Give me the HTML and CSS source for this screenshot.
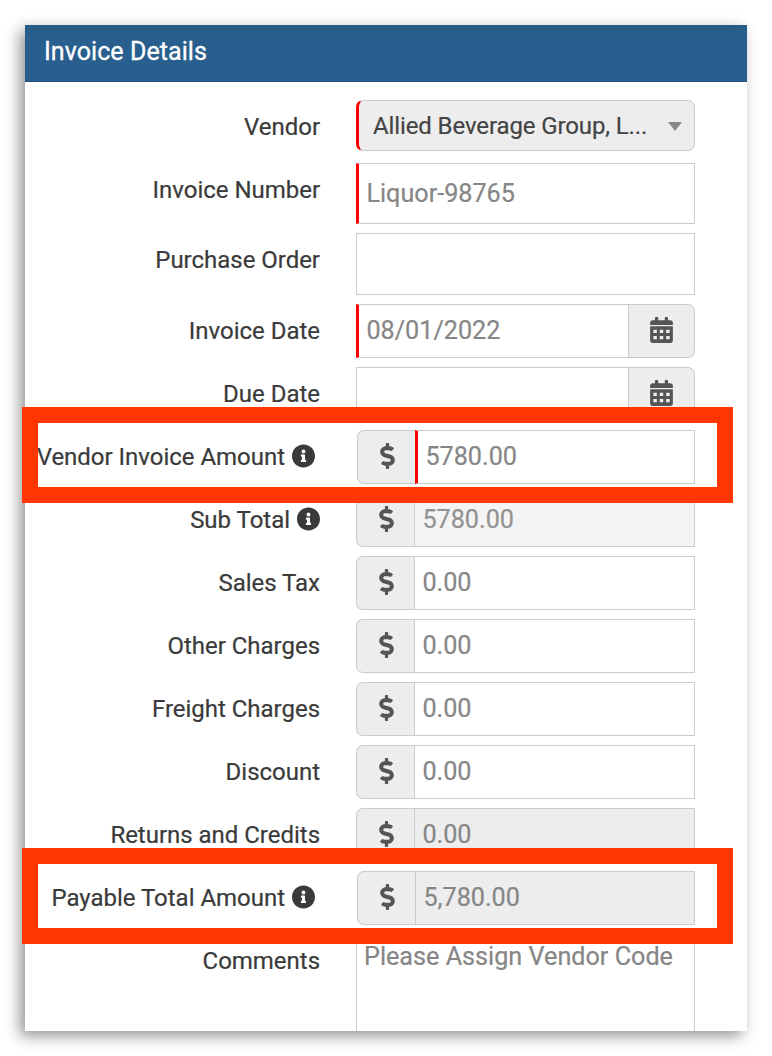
FILE: index.html
```html
<!DOCTYPE html>
<html lang="en">
<head>
    <meta charset="UTF-8">
    <meta name="viewport" content="width=device-width, initial-scale=1.0">
    <title>Invoice Details</title>
    <link rel="stylesheet" href="styles.css">
</head>
<body>
    <svg class="icon-defs" width="0" height="0">
        <symbol id="dollar" viewBox="0 0 288 512">
            <path d="M209.2 233.4l-108-31.6C88.7 198.2 80 186.5 80 173.5c0-16.3 13.2-29.5 29.5-29.5h66.3c12.2 0 24.2 3.7 34.2 10.5 6.1 4.1 14.3 3.1 19.5-2l34.8-34c7.1-6.9 6.1-18.4-1.8-24.5C238 74.8 207.4 64.1 176 64V16c0-8.8-7.2-16-16-16h-32c-8.8 0-16 7.2-16 16v48h-2.5C45.8 64-5.4 118.7.5 183.6c4.2 46.1 39.4 83.6 83.8 96.6l102.5 30c12.5 3.7 21.2 15.3 21.2 28.3 0 16.3-13.2 29.5-29.5 29.5h-66.3C100 368 88 364.3 78 357.5c-6.1-4.1-14.3-3.1-19.5 2l-34.8 34c-7.1 6.9-6.1 18.4 1.8 24.5 24.5 19.2 55.1 29.9 86.5 30v48c0 8.8 7.2 16 16 16h32c8.8 0 16-7.2 16-16v-48.2c46.6-.9 90.3-28.6 105.7-72.7 21.5-61.6-14.6-124.8-72.5-141.7z"/>
        </symbol>
        <symbol id="info" viewBox="8 8 496 496">
            <path d="M256 8C119.043 8 8 119.083 8 256c0 136.997 111.043 248 248 248s248-111.003 248-248C504 119.083 392.957 8 256 8zm0 110c23.196 0 42 18.804 42 42s-18.804 42-42 42-42-18.804-42-42 18.804-42 42-42zm56 254c0 6.627-5.373 12-12 12h-88c-6.627 0-12-5.373-12-12v-24c0-6.627 5.373-12 12-12h12v-64h-12c-6.627 0-12-5.373-12-12v-24c0-6.627 5.373-12 12-12h64c6.627 0 12 5.373 12 12v100h12c6.627 0 12 5.373 12 12v24z"/>
        </symbol>
        <symbol id="calendar" viewBox="0 0 448 512">
            <path fill-rule="evenodd" d="M0 464c0 26.500 21.500 48 48 48h352c26.500 0 48-21.500 48-48V184H0v280zM64 250h68v64H64zM190 250h68v64h-68zM316 250h68v64h-68zM64 376h68v64H64zM190 376h68v64h-68zM316 376h68v64h-68zM400 64h-48V16c0-8.800-7.200-16-16-16h-32c-8.800 0-16 7.200-16 16v48H160V16c0-8.800-7.200-16-16-16h-32c-8.800 0-16 7.200-16 16v48H48C21.500 64 0 85.500 0 112v44h448v-44c0-26.500-21.500-48-48-48z"/>
        </symbol>
    </svg>

    <div class="panel">
        <h2 class="panel-title">Invoice Details</h2>
        <div class="form">
            <div class="row row-vendor">
                <div class="label">Vendor</div>
                <div class="select required">
                    <span>Allied Beverage Group, L...</span>
                    <i class="caret"></i>
                </div>
            </div>
            <div class="row row-number">
                <div class="label">Invoice Number</div>
                <div class="field required">Liquor-98765</div>
            </div>
            <div class="row row-order">
                <div class="label">Purchase Order</div>
                <div class="field"></div>
            </div>
            <div class="row">
                <div class="label">Invoice Date</div>
                <div class="group">
                    <div class="field required">08/01/2022</div>
                    <div class="addon addon-right"><svg class="icon-calendar"><use href="#calendar"/></svg></div>
                </div>
            </div>
            <div class="row">
                <div class="label">Due Date</div>
                <div class="group">
                    <div class="field"></div>
                    <div class="addon addon-right"><svg class="icon-calendar"><use href="#calendar"/></svg></div>
                </div>
            </div>
            <div class="row highlight">
                <div class="label">Vendor Invoice Amount <svg class="icon-info"><use href="#info"/></svg></div>
                <div class="group">
                    <div class="addon"><svg class="icon-dollar"><use href="#dollar"/></svg></div>
                    <div class="field required">5780.00</div>
                </div>
            </div>
            <div class="row">
                <div class="label">Sub Total <svg class="icon-info"><use href="#info"/></svg></div>
                <div class="group">
                    <div class="addon"><svg class="icon-dollar"><use href="#dollar"/></svg></div>
                    <div class="field disabled">5780.00</div>
                </div>
            </div>
            <div class="row">
                <div class="label">Sales Tax</div>
                <div class="group">
                    <div class="addon"><svg class="icon-dollar"><use href="#dollar"/></svg></div>
                    <div class="field">0.00</div>
                </div>
            </div>
            <div class="row">
                <div class="label">Other Charges</div>
                <div class="group">
                    <div class="addon"><svg class="icon-dollar"><use href="#dollar"/></svg></div>
                    <div class="field">0.00</div>
                </div>
            </div>
            <div class="row">
                <div class="label">Freight Charges</div>
                <div class="group">
                    <div class="addon"><svg class="icon-dollar"><use href="#dollar"/></svg></div>
                    <div class="field">0.00</div>
                </div>
            </div>
            <div class="row">
                <div class="label">Discount</div>
                <div class="group">
                    <div class="addon"><svg class="icon-dollar"><use href="#dollar"/></svg></div>
                    <div class="field">0.00</div>
                </div>
            </div>
            <div class="row">
                <div class="label">Returns and Credits</div>
                <div class="group">
                    <div class="addon"><svg class="icon-dollar"><use href="#dollar"/></svg></div>
                    <div class="field readonly">0.00</div>
                </div>
            </div>
            <div class="row highlight">
                <div class="label">Payable Total Amount <svg class="icon-info"><use href="#info"/></svg></div>
                <div class="group">
                    <div class="addon"><svg class="icon-dollar"><use href="#dollar"/></svg></div>
                    <div class="field readonly">5,780.00</div>
                </div>
            </div>
            <div class="row row-comments">
                <div class="label">Comments</div>
                <div class="field comments">Please Assign Vendor Code</div>
            </div>
        </div>
    </div>
</body>
</html>
```

FILE: styles.css
```css
*,
*::after {
    box-sizing: border-box;
}

body {
    margin: 0;
    padding: 25px;
    background-color: #fff;
    font-family: Roboto, Arial, sans-serif;
    font-size: 24px;
    color: #3a3a3a;
    -webkit-text-stroke: 0.2px;
}

.icon-defs {
    display: none;
}

svg {
    fill: currentColor;
}

.panel {
    width: 722px;
    height: 1006px;
    background-color: #fff;
    box-shadow: -5px 5px 14px rgba(0, 0, 0, 0.42);
}

.panel-title {
    height: 57px;
    margin: 0;
    padding-left: 19px;
    background: linear-gradient(#265a86, #295f8e 10px);
    border-bottom: 1px solid #1f4d77;
    color: #fff;
    font-size: 25px;
    font-weight: 400;
    letter-spacing: 0.07px;
    line-height: 54px;
    -webkit-text-stroke: 0.3px #fff;
}

.form {
    display: flex;
    flex-direction: column;
    gap: 9px;
    padding-top: 18px;
}

.row {
    position: relative;
    display: flex;
    gap: 36px;
    height: 54px;
}

.row-vendor {
    height: 51px;
    margin-bottom: 3px;
}

.row-number {
    height: 61px;
}

.row-order {
    height: 62px;
}

.row-comments {
    height: 97px;
}

.label {
    display: flex;
    justify-content: flex-end;
    gap: 7px;
    width: 295px;
    height: 54px;
    line-height: 54px;
    letter-spacing: -0.02px;
    white-space: nowrap;
}

.group,
.select,
.row > .field {
    display: flex;
    width: 339px;
}

.field {
    display: flex;
    flex: 1;
    align-items: center;
    padding: 0 0 2px 7.4px;
    background-color: #fff;
    border: 1px solid #ccc;
    color: #868686;
    font-size: 25.2px;
}

.row > .field {
    flex: none;
    padding-bottom: 0;
}

.select {
    align-items: center;
    justify-content: space-between;
    padding: 0 12px 0 14px;
    background-color: #ededed;
    border: 1px solid #ccc;
    border-radius: 7px;
    color: #444;
    letter-spacing: -0.11px;
}

.required,
.row > .required {
    border-left: 3px solid #f00;
}

.disabled {
    background-color: #f4f4f4;
    color: #929292;
}

.readonly {
    background-color: #ededed;
}

.caret {
    margin-top: 1px;
    border-top: 9px solid #888;
    border-left: 7px solid transparent;
    border-right: 7px solid transparent;
}

.addon {
    display: flex;
    align-items: center;
    justify-content: center;
    width: 58px;
    background-color: #ededed;
    border: 1px solid #ccc;
    border-right: none;
    border-radius: 7px 0 0 7px;
    color: #555;
}

.addon-right {
    width: 66px;
    border-left: none;
    border-right: 1px solid #ccc;
    border-radius: 0 7px 7px 0;
}

.icon-dollar {
    width: 15px;
    height: 26px;
    margin: 0 0 2px 1px;
}

.icon-calendar {
    width: 23px;
    height: 26px;
    margin: 0 1px 3px 0;
}

.icon-info {
    width: 23px;
    height: 24px;
    margin-top: 14px;
}

/* red callout frame drawn around the row */
.highlight::after {
    content: "";
    position: absolute;
    z-index: 1;
    top: -23px;
    left: -3px;
    width: 711px;
    height: 96px;
    border: 16px solid #ff3600;
}

.highlight .label {
    width: 290px;
}

.highlight .group {
    width: 338px;
    margin-left: 6px;
}

.row > .comments {
    align-items: flex-start;
    padding: 7px 0 0 7px;
    border-bottom: none;
}
```
